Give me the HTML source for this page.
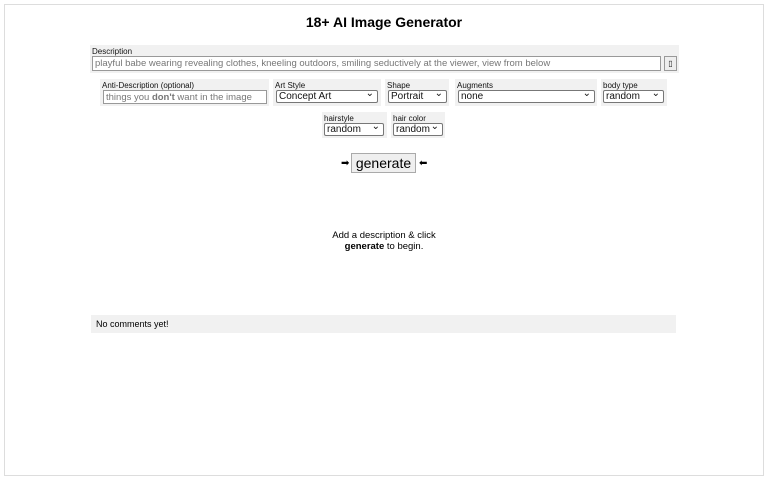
<!DOCTYPE html><html><head><style>
body{margin:0;width:768px;height:480px;background:#fff;font-family:"Liberation Sans",sans-serif;position:relative;overflow:hidden}
.a{position:absolute}
.frame{left:4px;top:4px;width:758px;height:470px;border:1px solid #ddd}
.box{background:#f1f1f1;font-size:8px;color:#111;padding:2px 2px 1px;box-sizing:border-box;line-height:9px}
.in{position:absolute;border:1px solid #999;background:#fff;font-size:9.5px;color:#777;box-sizing:border-box;padding:1px 2px;white-space:nowrap;overflow:hidden;line-height:11px}
.sel{position:absolute;border:1px solid #777;background:#fff;font-size:10px;color:#111;box-sizing:border-box;padding:0 2px;border-radius:2px;height:13px;line-height:12px}
.sel:after{content:"⌄";position:absolute;right:3px;top:-3px;font-size:10px}
</style></head><body>
<div class="a frame"></div>
<div class="a" style="left:0;width:768px;top:14px;text-align:center;font-weight:bold;font-size:14px">18+ AI Image Generator</div>
<div class="a box" style="left:90px;top:45px;width:589px;height:28px">Description
<div class="in" style="left:2px;top:11px;width:569px;height:15px">playful babe wearing revealing clothes, kneeling outdoors, smiling seductively at the viewer, view from below</div>
<div class="in" style="left:574px;top:11px;width:13px;height:15px;color:#222;font-size:8px;background:#eee;text-align:center">▯</div></div>
<div class="a box" style="left:100px;top:79px;width:169px;height:27px">Anti-Description (optional)
<div class="in" style="left:3px;top:11px;width:164px;height:14px">things you <b>don't</b> want in the image</div></div>
<div class="a box" style="left:273px;top:79px;width:108px;height:27px">Art Style<div class="sel" style="left:3px;top:11px;width:102px">Concept Art</div></div>
<div class="a box" style="left:385px;top:79px;width:64px;height:27px">Shape<div class="sel" style="left:3px;top:11px;width:59px">Portrait</div></div>
<div class="a box" style="left:455px;top:79px;width:142px;height:27px">Augments<div class="sel" style="left:3px;top:11px;width:137px">none</div></div>
<div class="a box" style="left:601px;top:79px;width:66px;height:27px">body type<div class="sel" style="left:2px;top:11px;width:61px">random</div></div>
<div class="a box" style="left:322px;top:112px;width:65px;height:26px">hairstyle<div class="sel" style="left:2px;top:11px;width:60px">random</div></div>
<div class="a box" style="left:391px;top:112px;width:54px;height:26px">hair color<div class="sel" style="left:2px;top:11px;width:50px">random</div></div>
<div class="a" style="left:341px;top:158px;font-size:10px">➡</div>
<div class="a" style="left:351px;top:153px;width:65px;height:20px;box-sizing:border-box;border:1px solid #aaa;background:#efefef;font-size:14px;text-align:center;line-height:19px">generate</div>
<div class="a" style="left:419px;top:158px;font-size:10px">⬅</div>
<div class="a" style="left:0;width:768px;top:230px;text-align:center;font-size:9.5px;line-height:11px">Add a description &amp; click<br><b>generate</b> to begin.</div>
<div class="a" style="left:91px;top:315px;width:585px;height:18px;background:#f1f1f1;font-size:9px;line-height:18px;padding-left:5px;box-sizing:border-box">No comments yet!</div>
</body></html>
